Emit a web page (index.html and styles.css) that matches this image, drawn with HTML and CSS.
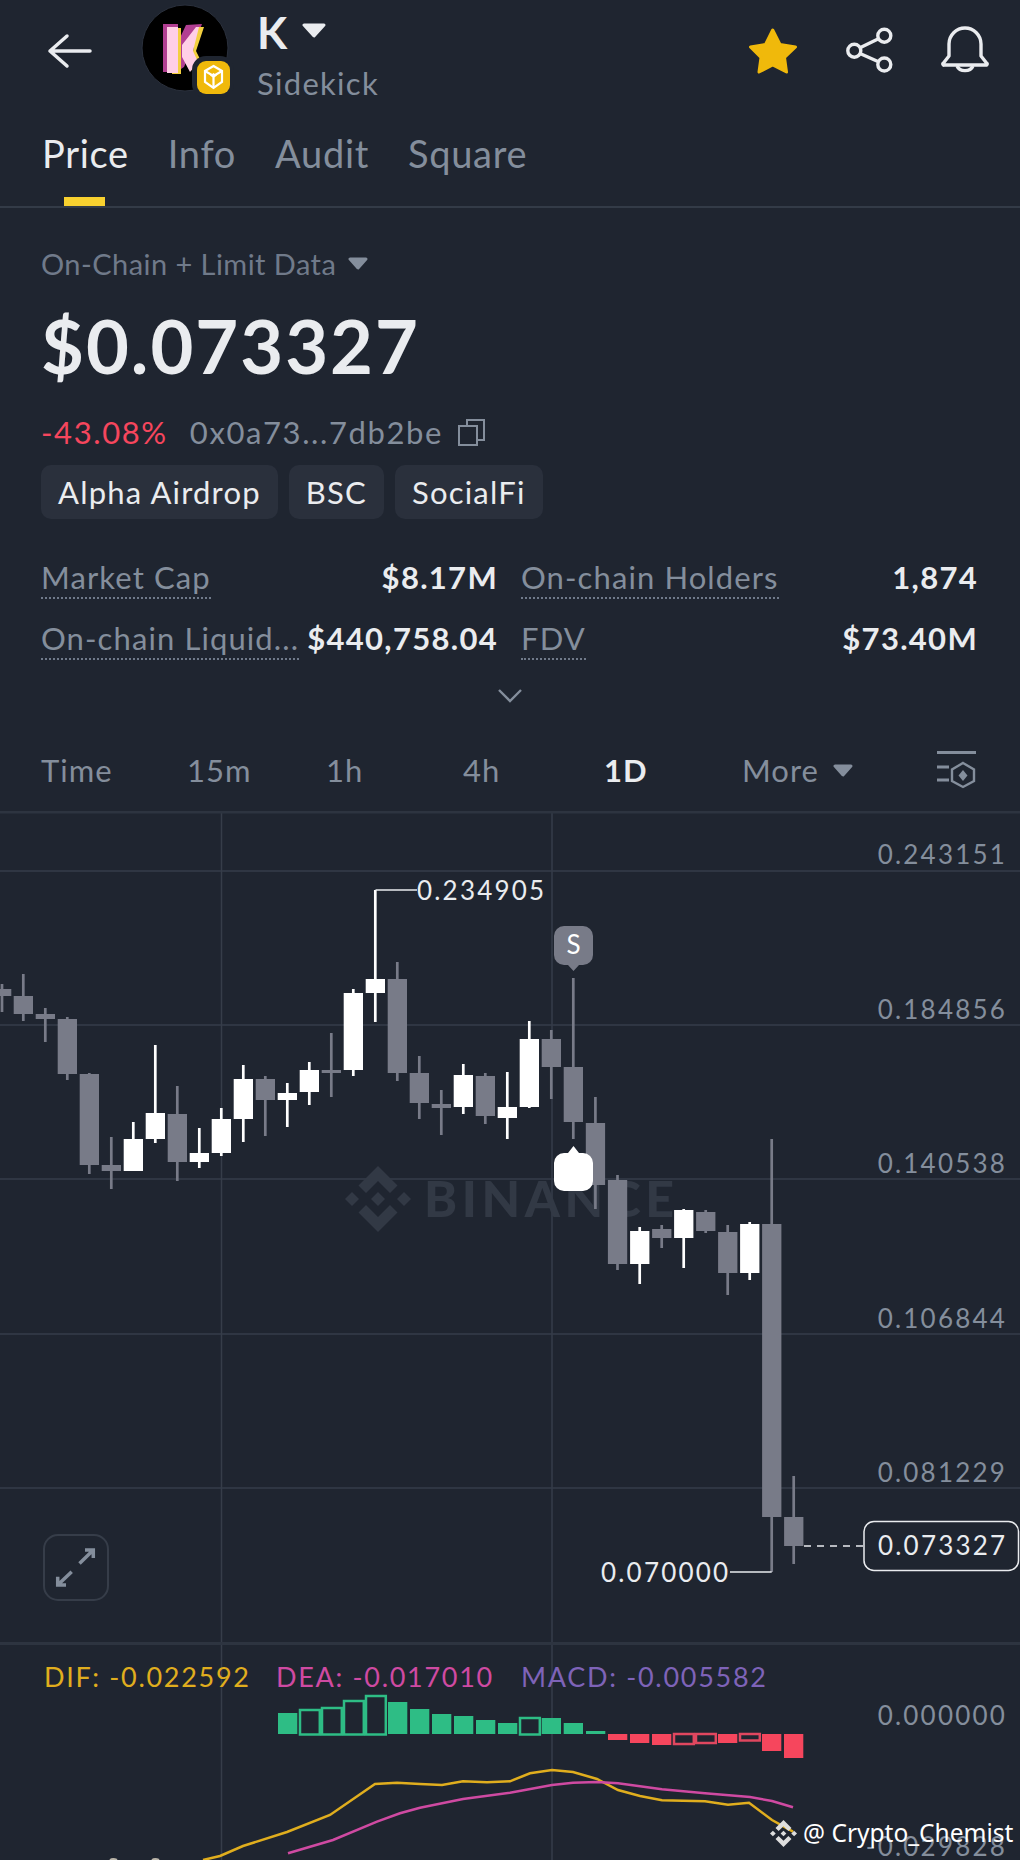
FILE: index.html
```html
<!DOCTYPE html>
<html>
<head>
    <title>K - Price</title>
    <meta charset="UTF-8">
    <link rel="stylesheet" href="styles.css">
</head>
<body>
    <svg class="defs" width="0" height="0">
        <symbol id="binance-mark" viewBox="-33 -33 66 66">
            <path d="M0-33 19.5-13.5 12-6 0-18-12-6-19.5-13.5Z"/>
            <path d="M0 33 19.5 13.5 12 6 0 18-12 6-19.5 13.5Z"/>
            <path d="M0-7 7 0 0 7-7 0Z"/>
            <path d="M-26-7-19 0-26 7-33 0Z"/>
            <path d="M26-7 33 0 26 7 19 0Z"/>
        </symbol>
    </svg>

    <div id="header">
        <svg class="back" viewBox="46 32 46 38" width="46" height="38">
            <path d="M67 36 50 51 67 66M50 51H90"/>
        </svg>
        <svg class="avatar" viewBox="138 2 96 96" width="96" height="96">
            <circle cx="185" cy="48" r="43" fill="#000" stroke="#2a303c"/>
            <path fill="#b23f92" d="M163 24h15v48h-15zM178 42l8-17 16-1-4 10-14 33-6 4z"/>
            <path fill="#f3cf3f" d="M172 28h9v46h-9zM196 27h8l-8 24 5 10-8 13-2-6z"/>
            <path fill="#ffcfe6" d="M167 27h11v46h-11zM182 45l14-18h3l-6 24 5 11-8 10-8-15z"/>
            <rect x="192" y="56" width="42" height="42" rx="14" fill="#1f2530"/>
            <rect x="197" y="61" width="33" height="33" rx="9" fill="#f0b90b"/>
            <path fill="none" stroke="#fff" stroke-width="2.200" d="M213.500 66 222 71V82L213.500 88 205 82V71Z"/>
            <path fill="none" stroke="#fff" stroke-width="2.200" d="M205 71 213.500 76 222 71M213.500 76V88"/>
            <path fill="#fff" d="M213.500 73 217 75.500 213.500 78 210 75.500Z"/>
        </svg>
        <div class="title">
            <div class="symbol">K <svg class="caret caret-white" viewBox="0 0 24 15" width="24" height="15"><path d="M2 2H22L12 13Z"/></svg></div>
            <div class="subtitle">Sidekick</div>
        </div>
        <div class="actions">
            <svg viewBox="748 28 50 50" width="50" height="50">
                <path class="star" d="M771.700 32 779 46.500 794.500 49 783.500 59.500 785.500 74 771.700 67 758 74 760 59.500 749.500 49 764.500 46.500Z"/>
            </svg>
            <svg viewBox="845 28 48 48" width="48" height="48">
                <g class="line-icon">
                    <circle cx="883.300" cy="36.700" r="6.500"/>
                    <circle cx="853.300" cy="51.700" r="6.500"/>
                    <circle cx="883.300" cy="65.500" r="6.500"/>
                    <path d="M877.500 39.700 859 48.700M859 54.500 877.500 62.700"/>
                </g>
            </svg>
            <svg viewBox="940 26 48 50" width="48" height="50">
                <g class="line-icon">
                    <path d="M948 56V44a16 16 0 0 1 32 0V56l5.500 7a1 1 0 0 1-1 2H943.500a1 1 0 0 1-1-2Z"/>
                    <path d="M956 66a8.500 7 0 0 0 16 0"/>
                </g>
            </svg>
        </div>
    </div>

    <div class="tabs">
        <div class="tab tab-active">Price</div>
        <div class="tab">Info</div>
        <div class="tab">Audit</div>
        <div class="tab">Square</div>
    </div>

    <div class="summary">
        <div class="source">On-Chain + Limit Data <svg class="caret caret-grey" viewBox="0 0 20 13" width="20" height="13"><path d="M2 2H18L10 11Z"/></svg></div>
        <div class="price">$0.073327</div>
        <div class="change-row">
            <span class="change">-43.08%</span>
            <span class="address">0x0a73...7db2be</span>
            <svg class="copy" viewBox="0 0 28 28" width="28" height="28">
                <path d="M2 8H20V27H2ZM10 8V2H27V22H20"/>
            </svg>
        </div>
        <div class="tags">
            <div class="tag">Alpha Airdrop</div>
            <div class="tag">BSC</div>
            <div class="tag">SocialFi</div>
        </div>
        <div class="stats">
            <div class="stat"><span class="stat-label">Market Cap</span><span class="stat-value">$8.17M</span></div>
            <div class="stat"><span class="stat-label">On-chain Holders</span><span class="stat-value">1,874</span></div>
            <div class="stat"><span class="stat-label">On-chain Liquid...</span><span class="stat-value">$440,758.04</span></div>
            <div class="stat"><span class="stat-label">FDV</span><span class="stat-value">$73.40M</span></div>
        </div>
        <svg class="chevron" viewBox="0 0 26 15" width="26" height="15"><path d="M2 2 13 13 24 2"/></svg>
    </div>

    <div class="intervals">
        <div>Time</div>
        <div>15m</div>
        <div>1h</div>
        <div>4h</div>
        <div class="interval-active">1D</div>
        <div>More <svg class="caret caret-grey" viewBox="0 0 20 13" width="20" height="13"><path d="M2 2H18L10 11Z"/></svg></div>
        <svg class="chart-settings" viewBox="938 751 40 38" width="40" height="38">
            <path class="settings-bars" d="M938 752.500H977M938 767H950M938 780H950"/>
            <path class="settings-hex" d="M964 763 975 769.500V781L964 787 953 781V769.500Z"/>
            <path class="settings-dot" d="M964 770 968.500 775.500 964 781 959.500 775.500Z"/>
        </svg>
    </div>

    <svg id="chart" viewBox="0 811 1020 1049" width="1020" height="1049">
        <!-- grid -->
        <g class="grid">
            <path d="M0 871H1020M0 1025H1020M0 1179H1020M0 1334H1020M0 1488H1020"/>
            <path d="M221.500 811V1860M552 811V1860"/>
        </g>
        <path class="grid-strong" d="M0 812H1020M0 1643.500H1020"/>

        <!-- watermark -->
        <use class="watermark" href="#binance-mark" x="345" y="1166" width="66" height="66"/>
        <text class="watermark watermark-text" x="424" y="1217">BINANCE</text>

        <!-- falling candles -->
        <g class="candle-down">
            <path d="M2 984V1012"/><rect x="-8" y="989" width="19.300" height="7"/>
            <path d="M23.300 974V1021"/><rect x="13.700" y="996" width="19.300" height="18"/>
            <path d="M45.300 1008V1042"/><rect x="35.700" y="1014" width="19.300" height="5"/>
            <path d="M67.300 1017V1080"/><rect x="57.700" y="1019" width="19.300" height="55"/>
            <path d="M89.300 1073V1174"/><rect x="79.700" y="1074" width="19.300" height="91"/>
            <path d="M111.300 1137V1189"/><rect x="101.700" y="1165" width="19.300" height="6"/>
            <path d="M177.300 1086V1181"/><rect x="167.700" y="1114" width="19.300" height="48"/>
            <path d="M265.300 1076V1136"/><rect x="255.700" y="1079" width="19.300" height="21"/>
            <path d="M331.300 1033V1097"/><rect x="321.700" y="1070" width="19.300" height="3"/>
            <path d="M397.300 962V1081"/><rect x="387.700" y="979" width="19.300" height="94"/>
            <path d="M419.300 1056V1119"/><rect x="409.700" y="1073" width="19.300" height="30"/>
            <path d="M441.300 1090V1135"/><rect x="431.700" y="1104" width="19.300" height="4"/>
            <path d="M485.300 1073V1124"/><rect x="475.700" y="1076" width="19.300" height="40"/>
            <path d="M551.300 1030V1099"/><rect x="541.700" y="1039" width="19.300" height="28"/>
            <path d="M573.300 978V1139"/><rect x="563.700" y="1067" width="19.300" height="55"/>
            <path d="M595.400 1097V1209"/><rect x="585.800" y="1123" width="19.300" height="62"/>
            <path d="M617.500 1175V1270"/><rect x="607.900" y="1180" width="19.300" height="84"/>
            <path d="M661.700 1225V1248"/><rect x="652.100" y="1229" width="19.300" height="9"/>
            <path d="M705.700 1210V1233"/><rect x="696.100" y="1212" width="19.300" height="19"/>
            <path d="M727.700 1225V1295"/><rect x="718.100" y="1232" width="19.300" height="41"/>
            <path d="M771.700 1139V1572"/><rect x="762.100" y="1224" width="19.300" height="293"/>
            <path d="M793.700 1476V1564"/><rect x="784.100" y="1517" width="19.300" height="29"/>
        </g>

        <!-- rising candles -->
        <g class="candle-up">
            <path d="M133.300 1122V1171"/><rect x="123.700" y="1139" width="19.300" height="32"/>
            <path d="M155.300 1045V1143"/><rect x="145.700" y="1113" width="19.300" height="26"/>
            <path d="M199.300 1128V1168"/><rect x="189.700" y="1153" width="19.300" height="9"/>
            <path d="M221.300 1108V1156"/><rect x="211.700" y="1119" width="19.300" height="34"/>
            <path d="M243.300 1065V1142"/><rect x="233.700" y="1079" width="19.300" height="40"/>
            <path d="M287.300 1083V1127"/><rect x="277.700" y="1093" width="19.300" height="7"/>
            <path d="M309.300 1062V1105"/><rect x="299.700" y="1070" width="19.300" height="22"/>
            <path d="M353.300 989V1076"/><rect x="343.700" y="993" width="19.300" height="77"/>
            <path d="M375.300 890V1022"/><rect x="365.700" y="979" width="19.300" height="14"/>
            <path d="M463.300 1064V1114"/><rect x="453.700" y="1075" width="19.300" height="32"/>
            <path d="M507.300 1072V1139"/><rect x="497.700" y="1107" width="19.300" height="11"/>
            <path d="M529.300 1021V1108"/><rect x="519.700" y="1039" width="19.300" height="68"/>
            <path d="M639.700 1227V1284"/><rect x="630.100" y="1231" width="19.300" height="33"/>
            <path d="M683.700 1209V1268"/><rect x="674.100" y="1210" width="19.300" height="28"/>
            <path d="M749.700 1222V1280"/><rect x="740.100" y="1224" width="19.300" height="49"/>
        </g>

        <!-- high, low and last price -->
        <path class="leader" d="M375.500 890H417"/>
        <path class="leader" d="M771.700 1572H730"/>
        <text class="value-label" x="417" y="900">0.234905</text>
        <text class="value-label" x="601" y="1582">0.070000</text>
        <path class="last-dash" d="M804 1546H863"/>
        <rect class="last-box" x="864" y="1521.500" width="154.500" height="49" rx="10"/>
        <text class="value-label" x="878" y="1555">0.073327</text>

        <!-- trade markers -->
        <path class="marker-sell" d="M564 926H583a10 10 0 0 1 10 10V955a10 10 0 0 1-10 10H579L573.500 971 568 965H564a10 10 0 0 1-10-10V936a10 10 0 0 1 10-10Z"/>
        <text class="marker-text" x="573.500" y="954">S</text>
        <path class="marker-buy" d="M564 1153H568L573.500 1146 579 1153H583a10 10 0 0 1 10 10V1181a10 10 0 0 1-10 10H564a10 10 0 0 1-10-10V1163a10 10 0 0 1 10-10Z"/>

        <!-- price axis -->
        <g class="axis">
            <text x="1007" y="864">0.243151</text>
            <text x="1007" y="1019">0.184856</text>
            <text x="1007" y="1173">0.140538</text>
            <text x="1007" y="1328">0.106844</text>
            <text x="1007" y="1482">0.081229</text>
            <text x="1007" y="1725">0.000000</text>
            <text x="1007" y="1856">-0.029828</text>
        </g>

        <!-- fullscreen -->
        <rect class="fullscreen-box" x="44" y="1535" width="64" height="65" rx="14"/>
        <path class="fullscreen-arrows" d="M79.500 1563.500 93.300 1550M85 1550H93.300V1558M71.700 1571.700 57.700 1585M57.700 1576.700V1585H66"/>

        <!-- MACD legend -->
        <text class="legend dif" x="44" y="1687">DIF: -0.022592</text>
        <text class="legend dea" x="276" y="1687">DEA: -0.017010</text>
        <text class="legend macd" x="521" y="1687">MACD: -0.005582</text>

        <!-- MACD histogram -->
        <g class="hist-green">
            <rect x="278" y="1713" width="19.300" height="21"/>
            <rect x="388" y="1702" width="19.300" height="32"/>
            <rect x="410" y="1709" width="19.300" height="25"/>
            <rect x="432" y="1714" width="19.300" height="20"/>
            <rect x="454" y="1716" width="19.300" height="18"/>
            <rect x="476" y="1720" width="19.300" height="14"/>
            <rect x="498" y="1723" width="19.300" height="11"/>
            <rect x="541.700" y="1718" width="19.300" height="16"/>
            <rect x="563.700" y="1723" width="19.300" height="11"/>
            <rect x="586" y="1731" width="19.300" height="3"/>
        </g>
        <g class="hist-green-hollow">
            <rect x="300" y="1710" width="19.800" height="24.500"/>
            <rect x="322" y="1708" width="19.800" height="26.500"/>
            <rect x="344" y="1701" width="19.800" height="33.500"/>
            <rect x="366" y="1696" width="19.800" height="38.500"/>
            <rect x="520" y="1718" width="19.800" height="16.500"/>
        </g>
        <g class="hist-red">
            <rect x="608" y="1734" width="19.300" height="6"/>
            <rect x="630" y="1734" width="19.300" height="9"/>
            <rect x="652" y="1734" width="19.300" height="11"/>
            <rect x="718" y="1734" width="19.300" height="9"/>
            <rect x="762" y="1734" width="19.300" height="17"/>
            <rect x="784" y="1734" width="19.300" height="24"/>
        </g>
        <g class="hist-red-hollow">
            <rect x="674" y="1734" width="19.800" height="10"/>
            <rect x="696" y="1734" width="19.800" height="9"/>
            <rect x="740" y="1734" width="19.800" height="6.500"/>
        </g>

        <!-- MACD lines -->
        <path class="line-dif" d="M203 1860 220 1856 243 1846 287 1832 330 1815 375 1784 397 1782.700 420 1784 442 1785 463 1781.300 487 1782.300 510 1781.300 530 1773.300 552 1770 573 1772 597 1779 618 1790 640 1796 662 1800.300 683 1800.700 705 1801.300 728 1804.700 749 1802.700 772 1820 793 1831.700"/>
        <path class="line-dea" d="M288 1853.300 333 1840 377 1821.700 400 1813.300 420 1807.700 463 1799 510 1792.700 552 1785 573 1782.700 597 1782 618 1783.300 662 1789.300 705 1793.300 750 1797 772 1801 793 1807.300"/>
        <path class="line-tail" d="M110 1860Q113 1858 117 1860M152 1860Q155 1858 159 1860"/>

        <!-- repost credit -->
        <use class="credit-mark" href="#binance-mark" x="770" y="1820" width="27" height="27"/>
        <text class="credit" x="803" y="1842">@ Crypto_Chemist</text>
    </svg>
</body>
</html>
```

FILE: styles.css
```css
* {
    box-sizing: border-box;
}
html, body {
    margin: 0;
    padding: 0;
}
body {
    width: 1020px;
    height: 1860px;
    overflow: hidden;
    background: #1f2530;
    color: #eaecef;
    font-family: "Lato", "Liberation Sans", sans-serif;
}
svg {
    display: block;
}
.defs {
    position: absolute;
}

/* header */
#header {
    display: flex;
    align-items: flex-start;
    height: 104px;
}
.back {
    margin: 32px 0 0 46px;
    fill: none;
    stroke: #eaecef;
    stroke-width: 3.5;
    stroke-linecap: round;
    stroke-linejoin: round;
}
.avatar {
    margin: 2px 0 0 46px;
}
.title {
    margin-left: 23px;
}
.symbol {
    display: flex;
    align-items: flex-start;
    gap: 15px;
    height: 60px;
    font-size: 44px;
    font-weight: 700;
    line-height: 64px;
}
.symbol .caret {
    margin-top: 23px;
}
.subtitle {
    margin-top: 5px;
    font-size: 31px;
    letter-spacing: 1.300px;
    line-height: 36px;
    color: #848e9c;
}
.caret path {
    stroke-width: 3;
    stroke-linejoin: round;
}
.caret-white path {
    fill: #eaecef;
    stroke: #eaecef;
}
.caret-grey path {
    fill: #848e9c;
    stroke: #848e9c;
}
.actions {
    display: flex;
    gap: 47px;
    margin: 26px 31px 0 auto;
    align-items: center;
}
.star {
    fill: #f0b90b;
    stroke: #f0b90b;
    stroke-width: 3;
    stroke-linejoin: round;
}
.line-icon {
    fill: none;
    stroke: #eaecef;
    stroke-width: 3.4;
    stroke-linejoin: round;
}

/* tabs */
.tabs {
    display: flex;
    gap: 39px;
    height: 104px;
    padding-left: 42px;
    border-bottom: 2px solid #333b47;
}
.tab {
    position: relative;
    height: 50px;
    margin-top: 24px;
    font-size: 38px;
    letter-spacing: 0.700px;
    line-height: 50px;
    color: #848e9c;
}
.tab-active {
    color: #eaecef;
}
.tab-active::after {
    content: "";
    position: absolute;
    left: 22px;
    width: 41px;
    top: 69px;
    height: 9px;
    background: #f8d12f;
}

/* token summary */
.summary {
    padding: 37px 42px 0 41px;
}
.source {
    display: flex;
    align-items: center;
    gap: 12px;
    height: 36px;
    font-size: 29px;
    letter-spacing: 0.450px;
    color: #707a8a;
}
.price {
    margin-top: 25px;
    height: 80px;
    font-size: 74px;
    font-weight: 700;
    letter-spacing: 2px;
    line-height: 80px;
}
.change-row {
    display: flex;
    align-items: center;
    margin-top: 28px;
    height: 36px;
    font-size: 31px;
    letter-spacing: 1.600px;
}
.change {
    color: #f6465d;
}
.address {
    margin-left: 22px;
    color: #848e9c;
}
.copy {
    margin-left: 14px;
    fill: none;
    stroke: #848e9c;
    stroke-width: 2;
}
.tags {
    display: flex;
    gap: 11px;
    margin-top: 15px;
}
.tag {
    height: 54px;
    padding: 0 17px;
    border-radius: 10px;
    background: #2a303c;
    font-size: 31px;
    letter-spacing: 1.200px;
    line-height: 54px;
}
.stats {
    display: grid;
    grid-template-columns: 1fr 1fr;
    column-gap: 23px;
    row-gap: 21px;
    margin-top: 40px;
}
.stat {
    display: flex;
    justify-content: space-between;
    font-size: 31px;
    line-height: 36px;
}
.stat-label {
    height: 40px;
    letter-spacing: 1.100px;
    color: #848e9c;
    border-bottom: 2px dotted #707a8a;
}
.stat-value {
    font-weight: 700;
    letter-spacing: 1.300px;
}
.chevron {
    margin: 28px auto 0;
    fill: none;
    stroke: #848e9c;
    stroke-width: 2.4;
}

/* interval bar */
.intervals {
    display: grid;
    grid-template-columns: 146px 139px 137px 141px 138px 195px auto;
    align-items: center;
    height: 60px;
    margin-top: 37px;
    padding-left: 41px;
    font-size: 31px;
    letter-spacing: 1px;
    color: #848e9c;
}
.interval-active {
    color: #eaecef;
    font-weight: 700;
}
.intervals div {
    display: flex;
    align-items: center;
    gap: 14px;
}
.settings-bars {
    fill: none;
    stroke: #848e9c;
    stroke-width: 3;
}
.settings-hex {
    fill: none;
    stroke: #848e9c;
    stroke-width: 2.4;
}
.settings-dot {
    fill: #848e9c;
}

/* chart */
#chart {
    position: absolute;
    left: 0;
    top: 811px;
}
#chart text {
    font-family: "Lato", "Liberation Sans", sans-serif;
}
.grid {
    fill: none;
    stroke: #363d49;
    stroke-width: 1.5;
}
.grid-strong {
    fill: none;
    stroke: #2d3440;
    stroke-width: 3;
}
.watermark {
    fill: #323945;
}
#chart .watermark-text {
    font-size: 50px;
    font-weight: 900;
    letter-spacing: 4.600px;
}
.candle-down path {
    stroke: #787b88;
    stroke-width: 2.7;
}
.candle-down rect {
    fill: #787b88;
}
.candle-up path {
    stroke: #fff;
    stroke-width: 2.7;
}
.candle-up rect {
    fill: #fff;
}
.leader {
    fill: none;
    stroke: #eaecef;
    stroke-width: 1.5;
}
.value-label {
    font-size: 26px;
    letter-spacing: 2.200px;
    fill: #eaecef;
}
.last-dash {
    fill: none;
    stroke: #eaecef;
    stroke-width: 1.5;
    stroke-dasharray: 7 6;
}
.last-box {
    fill: #1f2530;
    stroke: #eaecef;
    stroke-width: 1.5;
}
.marker-sell {
    fill: #787b88;
}
.marker-buy {
    fill: #fff;
}
.marker-text {
    font-size: 26px;
    fill: #fff;
    text-anchor: middle;
}
.axis text {
    font-size: 26px;
    letter-spacing: 2.200px;
    fill: #848e9c;
    text-anchor: end;
}
.fullscreen-box {
    fill: none;
    stroke: #363d49;
    stroke-width: 2;
}
.fullscreen-arrows {
    fill: none;
    stroke: #848e9c;
    stroke-width: 3.5;
}
.legend {
    font-size: 27px;
    letter-spacing: 1.700px;
}
.dif {
    fill: #e0ae1e;
}
.dea {
    fill: #cf4aa2;
}
.macd {
    fill: #7e63b8;
}
.hist-green rect {
    fill: #2ebd85;
}
.hist-green-hollow rect {
    fill: none;
    stroke: #2ebd85;
    stroke-width: 2.500;
}
.hist-red rect {
    fill: #f6465d;
}
.hist-red-hollow rect {
    fill: none;
    stroke: #e0475f;
    stroke-width: 2.500;
}
.line-dif {
    fill: none;
    stroke: #e0ae1e;
    stroke-width: 2.500;
}
.line-dea {
    fill: none;
    stroke: #cf4aa2;
    stroke-width: 2.500;
}
.line-tail {
    fill: none;
    stroke: #b9b4a8;
    stroke-width: 2;
}
.credit-mark {
    fill: #dedede;
}
#chart .credit {
    font-family: "Noto Sans", "Liberation Sans", sans-serif;
    font-size: 24.500px;
    fill: #fff;
}
```
